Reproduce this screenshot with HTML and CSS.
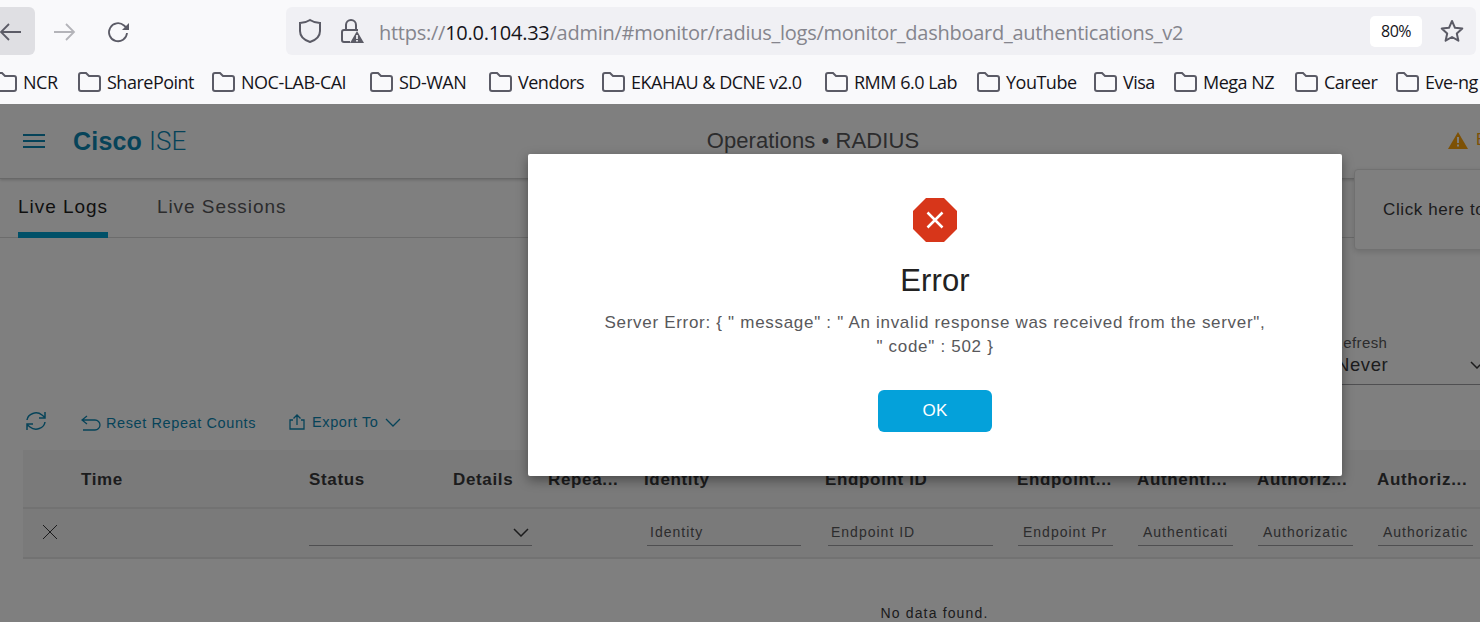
FILE: index.html
```html
<!DOCTYPE html>
<html lang="en">
<head>
<meta charset="utf-8">
<title>Cisco ISE</title>
<link rel="stylesheet" href="styles.css">
</head>
<body>
<div class="browser">
  <div class="toolbar">
    <div class="nav-btn back"><svg width="24" height="24" viewBox="0 0 24 24" class="ico-dark"><path d="M22 12H2M10 4l-8 8 8 8"/></svg></div>
    <div class="nav-btn fwd"><svg width="24" height="24" viewBox="0 0 24 24" class="ico-light"><path d="M1 12h20M13 4l8 8-8 8"/></svg></div>
    <div class="nav-btn reload"><svg width="24" height="24" viewBox="0 0 24 24" class="ico-dark"><path d="M20 13a9 9 0 1 1-3-7.500L21 9"/><path class="solid" d="M22 3v7h-7z"/></svg></div>
    <div class="urlbar">
      <svg class="shield" width="24" height="26" viewBox="0 0 24 26"><path d="M12 2c3 2 6 3 10 3v8c0 5-4 9-10 11C6 22 2 18 2 13V5c4 0 7-1 10-3z"/></svg>
      <svg class="lock" width="24" height="26" viewBox="0 0 24 26"><path class="lk" d="M6 12V7a5 5 0 0 1 10 0v5M10 24H4a2 2 0 0 1-2-2v-8a2 2 0 0 1 2-2h14"/><path class="wn" d="M17 13l7 12H10z"/><path class="wb" d="M17 17v4M17 22v1.400"/></svg>
      <span class="url"><span class="url-dim">https://</span><b class="url-host">10.0.104.33</b><span class="url-dim">/admin/#monitor/radius_logs/monitor_dashboard_authentications_v2</span></span>
      <span class="zoom-badge">80%</span>
      <svg class="star" width="24" height="24" viewBox="0 0 24 24"><path d="M12 2l3 6.800 7.300.8-5.500 4.900 1.600 7.200L12 18l-6.400 3.700 1.600-7.200L1.700 9.600 9 8.800z"/></svg>
    </div>
  </div>
  <div class="bookmarks">
    <a class="bm first"><svg class="folder" width="23" height="20" viewBox="0 0 23 20"><path d="M1 5V3a2 2 0 0 1 2-2h5l3 3h9a2 2 0 0 1 2 2v11a2 2 0 0 1-2 2H3a2 2 0 0 1-2-2z"/></svg>NCR</a>
    <a class="bm w1"><svg class="folder" width="23" height="20" viewBox="0 0 23 20"><path d="M1 5V3a2 2 0 0 1 2-2h5l3 3h9a2 2 0 0 1 2 2v11a2 2 0 0 1-2 2H3a2 2 0 0 1-2-2z"/></svg>SharePoint</a>
    <a class="bm w2"><svg class="folder" width="23" height="20" viewBox="0 0 23 20"><path d="M1 5V3a2 2 0 0 1 2-2h5l3 3h9a2 2 0 0 1 2 2v11a2 2 0 0 1-2 2H3a2 2 0 0 1-2-2z"/></svg>NOC-LAB-CAI</a>
    <a class="bm w3"><svg class="folder" width="23" height="20" viewBox="0 0 23 20"><path d="M1 5V3a2 2 0 0 1 2-2h5l3 3h9a2 2 0 0 1 2 2v11a2 2 0 0 1-2 2H3a2 2 0 0 1-2-2z"/></svg>SD-WAN</a>
    <a class="bm w4"><svg class="folder" width="23" height="20" viewBox="0 0 23 20"><path d="M1 5V3a2 2 0 0 1 2-2h5l3 3h9a2 2 0 0 1 2 2v11a2 2 0 0 1-2 2H3a2 2 0 0 1-2-2z"/></svg>Vendors</a>
    <a class="bm w5"><svg class="folder" width="23" height="20" viewBox="0 0 23 20"><path d="M1 5V3a2 2 0 0 1 2-2h5l3 3h9a2 2 0 0 1 2 2v11a2 2 0 0 1-2 2H3a2 2 0 0 1-2-2z"/></svg>EKAHAU &amp; DCNE v2.0</a>
    <a class="bm w6"><svg class="folder" width="23" height="20" viewBox="0 0 23 20"><path d="M1 5V3a2 2 0 0 1 2-2h5l3 3h9a2 2 0 0 1 2 2v11a2 2 0 0 1-2 2H3a2 2 0 0 1-2-2z"/></svg>RMM 6.0 Lab</a>
    <a class="bm w7"><svg class="folder" width="23" height="20" viewBox="0 0 23 20"><path d="M1 5V3a2 2 0 0 1 2-2h5l3 3h9a2 2 0 0 1 2 2v11a2 2 0 0 1-2 2H3a2 2 0 0 1-2-2z"/></svg>YouTube</a>
    <a class="bm w8"><svg class="folder" width="23" height="20" viewBox="0 0 23 20"><path d="M1 5V3a2 2 0 0 1 2-2h5l3 3h9a2 2 0 0 1 2 2v11a2 2 0 0 1-2 2H3a2 2 0 0 1-2-2z"/></svg>Visa</a>
    <a class="bm w9"><svg class="folder" width="23" height="20" viewBox="0 0 23 20"><path d="M1 5V3a2 2 0 0 1 2-2h5l3 3h9a2 2 0 0 1 2 2v11a2 2 0 0 1-2 2H3a2 2 0 0 1-2-2z"/></svg>Mega NZ</a>
    <a class="bm w10"><svg class="folder" width="23" height="20" viewBox="0 0 23 20"><path d="M1 5V3a2 2 0 0 1 2-2h5l3 3h9a2 2 0 0 1 2 2v11a2 2 0 0 1-2 2H3a2 2 0 0 1-2-2z"/></svg>Career</a>
    <a class="bm w11"><svg class="folder" width="23" height="20" viewBox="0 0 23 20"><path d="M1 5V3a2 2 0 0 1 2-2h5l3 3h9a2 2 0 0 1 2 2v11a2 2 0 0 1-2 2H3a2 2 0 0 1-2-2z"/></svg>Eve-ng</a>
  </div>
</div>

<div class="page">
  <header class="app-header">
    <svg class="burger" width="24" height="16" viewBox="0 0 24 16"><path d="M1 2h22M1 8h22M1 14h22"/></svg>
    <div class="brand"><b>Cisco</b> <span class="brand-thin">ISE</span></div>
    <div class="app-title">Operations • RADIUS</div>
    <div class="alert">
      <svg width="20" height="17" viewBox="0 0 20 17"><path class="tri" d="M10 0l10 17H0z"/><path class="tri-in" d="M10 5v6M10 12.500v2"/></svg>
      <span>E</span>
    </div>
  </header>

  <nav class="tabs">
    <a class="tab active">Live Logs</a>
    <a class="tab">Live Sessions</a>
  </nav>

  <section class="refresh">
    <div class="refresh-label">Refresh</div>
    <div class="refresh-value"><span>Never</span>
      <svg width="14" height="8" viewBox="0 0 14 8"><path d="M1 1l6 6 6-6"/></svg>
    </div>
  </section>

  <div class="actions">
    <svg class="act-sync" width="22" height="20" viewBox="0 0 22 20"><path d="M2 9a9 8 0 0 1 15-5l3 2.500M20 11a9 8 0 0 1-15 5l-3-2.500M20 1v6h-6M2 19v-6h6"/></svg>
    <span class="act reset"><svg width="20" height="16" viewBox="0 0 20 16"><path d="M6 1L1 5l5 4M1 5h13a4.500 4.500 0 0 1 0 10H2"/></svg>Reset Repeat Counts</span>
    <span class="act export"><svg width="16" height="16" viewBox="0 0 16 16"><path d="M4 6H1v9h14V6h-3M8 11V1M4.500 4.500L8 1l3.500 3.500"/></svg>Export To<svg class="act-chev" width="16" height="9" viewBox="0 0 16 9"><path d="M1 1l7 7 7-7"/></svg></span>
  </div>

  <div class="table">
    <div class="row head">
      <div></div>
      <div class="th">Time</div>
      <div class="th">Status</div>
      <div class="th">Details</div>
      <div class="th">Repea...</div>
      <div class="th">Identity</div>
      <div class="th">Endpoint ID</div>
      <div class="th">Endpoint...</div>
      <div class="th">Authenti...</div>
      <div class="th">Authoriz...</div>
      <div class="th">Authoriz...</div>
    </div>
    <div class="row filters">
      <svg class="clear" width="16" height="16" viewBox="0 0 16 16"><path d="M1 1l14 14M15 1L1 15"/></svg>
      <div></div>
      <div class="f f-status"><svg width="16" height="9" viewBox="0 0 16 9"><path d="M1 1l7 7 7-7"/></svg></div>
      <div></div>
      <div class="f f-id">Identity</div>
      <div class="f f-id">Endpoint ID</div>
      <div class="f f-sm">Endpoint Pr</div>
      <div class="f f-sm">Authenticati</div>
      <div class="f f-sm">Authorizatic</div>
      <div class="f f-sm">Authorizatic</div>
    </div>
    <div class="empty">No data found.</div>
  </div>

  <div class="toast">Click here to do visibility setup Do not show this again.</div>

  <div class="scrim"></div>

  <div class="modal" role="alertdialog">
    <svg class="err-icon" width="44" height="44" viewBox="0 0 44 44"><path class="oct" d="M13 0h18l13 13v18L31 44H13L0 31V13z"/><path class="oct-x" d="M14.500 14.500l15 15M29.500 14.500l-15 15"/></svg>
    <h1 class="modal-title">Error</h1>
    <p class="modal-msg">Server Error: { " message" : " An invalid response was received from the server",<br>" code" : 502 }</p>
    <button class="ok">OK</button>
  </div>
</div>
</body>
</html>
```

FILE: styles.css
```css
* { box-sizing: border-box; }
html, body { margin: 0; padding: 0; }
body {
  width: 1480px;
  height: 622px;
  overflow: hidden;
  background: #fff;
  font-family: "Liberation Sans", Arial, sans-serif;
}

/* Browser chrome */
.browser { height: 104px; background: #f9f9fb; font-family: "Open Sans", "Noto Sans", sans-serif; }
.toolbar { height: 62px; padding-top: 7px; display: flex; align-items: flex-start; }
.nav-btn { height: 48px; padding-top: 2px; display: flex; align-items: center; justify-content: center; }
.nav-btn svg { fill: none; stroke-width: 1.8; }
.back { width: 35px; background: #dfdfe3; border-radius: 0 6px 6px 0; justify-content: flex-start; margin-right: 7px; }
.back svg { margin-left: -1px; }
.fwd { width: 46px; justify-content: flex-start; margin-left: 11px; }
.reload { width: 24px; margin-left: 8px; margin-right: 155px; }
.ico-dark { stroke: #5b5b66; }
.ico-light { stroke: #b4b4b9; }
.solid { fill: #5b5b66; stroke: none; }
.urlbar {
  width: 1190px; height: 48px; background: #f0f0f4; border-radius: 6px;
  display: flex; align-items: center; padding: 0 12px;
}
.shield { fill: none; stroke: #5b5b66; stroke-width: 2; margin-right: 18px; }
.lock { margin-right: 15px; }
.lk { fill: none; stroke: #5b5b66; stroke-width: 2; }
.wn { fill: #5b5b66; }
.wb { stroke: #f0f0f4; stroke-width: 1.8; fill: none; }
.url { font-size: 20px; letter-spacing: -0.26px; white-space: nowrap; flex: 1; padding-top: 2px; }
.url-dim { color: #85858d; }
.url-host { font-weight: 400; color: #15141a; }
.zoom-badge {
  width: 52px; height: 31px; background: #fff; border-radius: 5px; color: #15141a;
  font-size: 16px; letter-spacing: -0.5px; display: flex; align-items: center; justify-content: center; margin-right: 18px;
}
.star { fill: none; stroke: #5b5b66; stroke-width: 2; stroke-linejoin: round; }

.bookmarks { height: 42px; padding-bottom: 2px; display: flex; align-items: center; white-space: nowrap; margin-left: -6px; }
.bm { display: flex; align-items: center; gap: 6px; font-size: 18px; letter-spacing: -0.5px; color: #15141a; flex: none; }
.folder { fill: none; stroke: #5b5b66; stroke-width: 2; flex: none; }
.first { width: 84px; }
.w1 { width: 134px; }
.w2 { width: 158px; }
.w3 { width: 119px; }
.w4 { width: 113px; }
.w5 { width: 223px; }
.w6 { width: 152px; }
.w7 { width: 117px; }
.w8 { width: 80px; }
.w9 { width: 121px; }
.w10 { width: 101px; }

/* ISE page */
.page { position: relative; height: 518px; overflow: hidden; background: #fff; }
.app-header {
  height: 75px; display: flex; align-items: center; position: relative;
  border-bottom: 1px solid #d0d0d0; box-shadow: 0 1px 3px rgba(0,0,0,.2); padding: 0 0 0 22px;
}
.burger { stroke: #0d87b3; stroke-width: 2; fill: none; flex: none; }
.brand { margin-left: 27px; font-size: 25px; color: #0d87b3; }
.brand b { font-weight: 700; letter-spacing: .2px; }
.brand-thin { font-family: Roboto, "Liberation Sans", sans-serif; font-weight: 300; font-size: 26px; }
.app-title { position: absolute; left: 0; width: 1626px; text-align: center; font-size: 22px; letter-spacing: .1px; color: #58585b; }
.alert { position: absolute; left: 1448px; top: 27px; display: flex; align-items: center; gap: 8px; color: #fba20a; font-size: 16px; }
.tri { fill: #fba20a; }
.tri-in { stroke: #fff; stroke-width: 2; fill: none; }

.tabs { height: 59px; display: flex; gap: 49px; padding-left: 18px; border-bottom: 1px solid #d8d8d8; }
.tab { font-size: 19px; letter-spacing: .95px; color: #58585b; padding-top: 17px; height: 59px; border-bottom: 6px solid transparent; }
.tab.active { color: #1f1f1f; border-bottom-color: #00a0d1; }

.refresh { width: 142px; margin: 97px 0 0 auto; height: 50px; border-bottom: 1px solid #9e9ea2; }
.refresh-label { font-size: 15px; line-height: 16px; color: #58585b; letter-spacing: .4px; margin-left: -6px; }
.refresh-value { display: flex; align-items: center; justify-content: space-between; font-size: 18.5px; letter-spacing: .6px; color: #39393b; margin: 3px -4px 0 -2px; line-height: 22px; }
.refresh-value svg { fill: none; stroke: #39393b; stroke-width: 1.5; }

.actions { height: 65px; display: flex; align-items: flex-start; padding: 26px 0 0 25px; color: #0d87b3; }
.act-sync { fill: none; stroke: #0d87b3; stroke-width: 1.5; flex: none; margin-right: 34px; }
.act { display: flex; align-items: center; font-size: 14.500px; letter-spacing: .6px; white-space: nowrap; }
.act svg { fill: none; stroke: #0d87b3; stroke-width: 1.300; flex: none; }
.reset { gap: 5px; margin-right: 33px; margin-top: 4px; }
.export { gap: 7px; margin-top: 3px; }

.table { margin-left: 23px; width: 1480px; }
.row { display: grid; grid-template-columns: 58px 228px 144px 95px 96px 181px 192px 120px 120px 120px 120px; }
.head { height: 59px; padding-top: 3px; background: #f4f4f4; border-bottom: 2px solid #e4e4e4; align-items: center; }
.th { font-size: 17px; font-weight: 700; color: #39393b; letter-spacing: .65px; white-space: nowrap; }
.filters {
  height: 50px; background: #f4f4f4; border-bottom: 2px solid #e4e4e4; align-items: start;
  grid-template-columns: 58px 228px 239px 96px 181px 192px 120px 120px 120px 120px;
}
.clear { stroke: #39393b; stroke-width: 1; fill: none; margin: 15px 0 0 19px; }
.f {
  height: 37px; border-bottom: 1px solid #9e9ea2; font-size: 14px; letter-spacing: 1px; color: #58585b;
  padding: 15px 0 0 3px; white-space: nowrap; overflow: hidden; margin: 0 24px 0 3px;
}
.f-status { margin: 0 16px 0 0; padding: 19px 3px 0 0; display: flex; justify-content: flex-end; }
.f-status svg { fill: none; stroke: #39393b; stroke-width: 1.500; }
.f-sm { margin-left: 1px; padding-left: 5px; padding-right: 5px; }
.empty { margin: 46px 0 0 0; width: 1823px; text-align: center; font-size: 14px; letter-spacing: 1.15px; color: #39393b; }

.toast {
  position: absolute; left: 1354px; top: 65px; width: 500px; height: 81px; background: #fff;
  border: 1px solid #e2e2e2; border-radius: 4px; box-shadow: 0 2px 6px rgba(0,0,0,.15);
  padding: 30px 0 0 28px; font-size: 17px; letter-spacing: .6px; color: #39393b; white-space: nowrap;
}

.scrim { position: absolute; inset: 0; background: rgba(0,0,0,.5); }

.modal {
  position: absolute; left: 528px; top: 50px; width: 814px; height: 322px; background: #fff;
  box-shadow: 0 4px 12px rgba(0,0,0,.4); border-radius: 2px;
  display: flex; flex-direction: column; align-items: center; padding-top: 44px;
}
.err-icon { flex: none; }
.oct { fill: #d7361a; }
.oct-x { stroke: #fff; stroke-width: 2.500; fill: none; }
.modal-title { margin: 20px 0 0; font-size: 31px; line-height: 38px; font-weight: 400; color: #222; letter-spacing: .1px; }
.modal-msg { margin: 11px 0 0; font-size: 17px; line-height: 24px; color: #58585b; text-align: center; letter-spacing: .7px; }
.ok {
  margin-top: 31px; width: 114px; height: 42px; border: 0; border-radius: 6px; background: #04a1da; color: #fff;
  font-family: inherit; font-size: 17px; letter-spacing: .3px;
}
```
